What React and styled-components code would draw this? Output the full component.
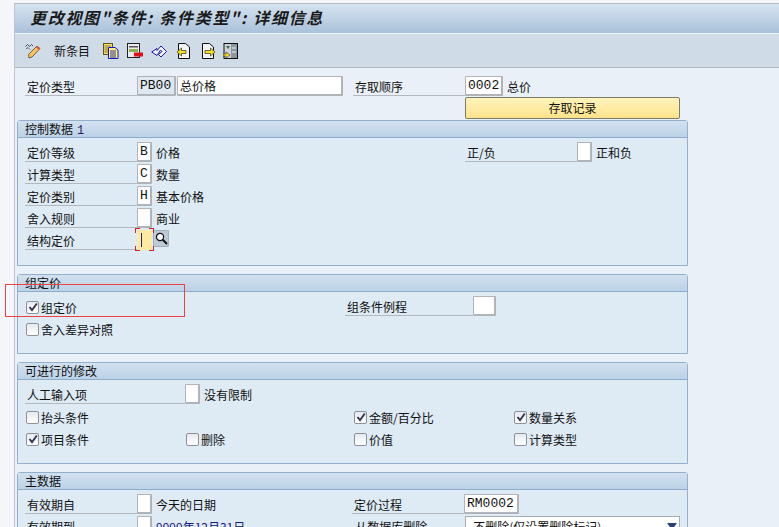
import React from 'react';
import styled, { createGlobalStyle } from 'styled-components';

const GlobalStyle = createGlobalStyle`
  html, body {
    margin: 0;
    padding: 0;
    height: 100%;
    overflow: hidden;
    background: #f4f6fa;
  }
  body {
    font-family: "Noto Sans CJK SC", "Liberation Sans", sans-serif;
    font-size: 12px;
    color: #111;
  }
`;

const Page = styled.div`
  position: relative;
  width: 779px;
  height: 527px;
  overflow: hidden;
  padding: 3px 0 0 14px;
  box-sizing: border-box;
`;

const Screen = styled.div`
  border-left: 1px solid #bcc4cd;
  border-top: 1px solid #b4bcc6;
  height: 100%;
  background: #e9f0f8;
`;

const TitleBar = styled.div`
  height: 26px;
  padding: 0 0 3px 15px;
  display: flex;
  align-items: center;
  background: linear-gradient(#d6e3ef, #a9c1da);
  border-bottom: 1px solid #eef3f8;
  font-size: 16px;
  font-weight: 700;
  font-style: italic;
  letter-spacing: 1.7px;
  color: #1a1a1a;
  white-space: nowrap;
`;

const Toolbar = styled.div`
  height: 33px;
  padding-left: 10px;
  display: flex;
  align-items: center;
  background: #cfdce8;
  border-bottom: 1px solid #aeb8c3;
`;

const ToolText = styled.span`
  margin: 0 13px 0 13px;
  line-height: 16px;
`;

const ToolIcon = styled.svg`
  width: 16px;
  height: 16px;
  margin-right: ${p => p.$gap ?? 8}px;
  flex: none;
`;

const Content = styled.div`
  padding: 8px 0 0 2px;
  width: 671px;
  display: flex;
  flex-direction: column;
`;

const HeadArea = styled.div`
  padding-left: 8px;
  height: 44px;
`;

const Row = styled.div`
  display: flex;
  align-items: stretch;
  height: 20px;
  margin-bottom: 2px;
`;

const Label = styled.div`
  width: ${p => p.$width || 112}px;
  flex: none;
  box-sizing: border-box;
  padding: 3px 0 0 2px;
  line-height: 15px;
  border-bottom: 1px solid #b3b8bd;
  white-space: nowrap;
`;

const Field = styled.div`
  width: ${p => p.$width || 15}px;
  flex: none;
  box-sizing: border-box;
  background: ${p => (p.$active ? '#fde9a2' : p.$readonly ? '#dfe8f0' : '#fff')};
  border: ${p => (p.$active ? '0 none' : '1px solid #b0b4b9')};
  border-right-width: ${p => (p.$active ? 0 : 2)}px;
  border-bottom-width: ${p => (p.$active ? 0 : 2)}px;
  border-radius: 1px;
  font-family: "Liberation Mono", monospace;
  font-size: 13px;
  line-height: 17px;
  padding-left: 2px;
  position: relative;
  white-space: nowrap;
`;

const Value = styled.span`
  margin-left: ${p => p.$gap ?? 4}px;
  padding-top: 3px;
  line-height: 15px;
  color: ${p => p.$color || 'inherit'};
  white-space: nowrap;
`;

const Spacer = styled.div`
  width: ${p => p.$width}px;
  flex: none;
`;

const TextInput = styled(Field)`
  font-family: "Noto Sans CJK SC", sans-serif;
  font-size: 12px;
  margin-left: 1px;
`;

const RecordButton = styled.button`
  display: block;
  width: 215px;
  height: 22px;
  margin: -1px 0 0 440px;
  padding: 0;
  border: 1px solid #7d7a66;
  border-radius: 2px;
  background: linear-gradient(#fff4bd, #fde28a);
  font: inherit;
  color: #111;
  line-height: 18px;
`;

const Panel = styled.section`
  height: ${p => p.$height}px;
  margin-bottom: ${p => p.$gap ?? 8}px;
  box-sizing: border-box;
  background: #deeaf4;
  border: 1px solid #93afcc;
  border-radius: 3px 3px 0 0;
`;

const PanelHeader = styled.div`
  height: 16px;
  padding-left: 7px;
  line-height: 16px;
  background: linear-gradient(#d2e1ef, #bcd2e7);
  border-bottom: 1px solid #8facca;
  white-space: nowrap;
`;

const PanelBody = styled.div`
  padding: 4px 0 0 7px;
`;

const Count = styled.span`
  font-family: "Liberation Mono", monospace;
  color: #2a1a6a;
  margin-left: 4px;
`;

const CheckRow = styled.div`
  display: flex;
  height: 20px;
  margin-bottom: 2px;
  align-items: stretch;
`;

const CheckCell = styled.label`
  display: flex;
  align-items: center;
  width: ${p => p.$width || 'auto'};
  flex: none;
  padding: 2px 0 0 1px;
  box-sizing: border-box;
  gap: 2px;
  white-space: nowrap;
`;

const Box = styled.span`
  width: 11px;
  height: 11px;
  flex: none;
  display: flex;
  align-items: center;
  justify-content: center;
  border: 1px solid #8d929a;
  border-radius: 2px;
  background: linear-gradient(#e6eaef, #ffffff);
`;

const FieldCaret = styled.span`
  position: absolute;
  left: 4px;
  top: 3px;
  width: 1px;
  height: 14px;
  background: #1b2a80;
`;

const redCorner = (x, y) => `linear-gradient(#d8202a, #d8202a) ${x} ${y}`;

// four L shaped corners round the focused field
const Focus = styled.span`
  position: absolute;
  left: -2px;
  top: -2px;
  width: 19px;
  height: 23px;
  pointer-events: none;
  background:
    ${redCorner('0', '0')} / 5px 1px no-repeat,
    ${redCorner('0', '0')} / 1px 5px no-repeat,
    ${redCorner('100%', '0')} / 5px 1px no-repeat,
    ${redCorner('100%', '0')} / 1px 5px no-repeat,
    ${redCorner('0', '100%')} / 5px 1px no-repeat,
    ${redCorner('0', '100%')} / 1px 5px no-repeat,
    ${redCorner('100%', '100%')} / 5px 1px no-repeat,
    ${redCorner('100%', '100%')} / 1px 5px no-repeat;
`;

const SearchHelp = styled.div`
  width: 16px;
  height: 17px;
  margin: 0 0 0 1px;
  flex: none;
  display: flex;
  align-items: center;
  justify-content: center;
  background: #bccad8;
  border: 1px solid #a5afba;
  box-sizing: border-box;
  border-radius: 1px;
`;

const SelectBox = styled.div`
  width: 215px;
  flex: none;
  box-sizing: border-box;
  display: flex;
  align-items: center;
  justify-content: space-between;
  padding: 0 0 0 7px;
  border: 1px solid #a6adb5;
  background: #fff;
  white-space: nowrap;
`;

const SelectArrow = styled.span`
  width: 0;
  height: 0;
  margin-right: 2px;
  border-left: 5px solid transparent;
  border-right: 5px solid transparent;
  border-top: 7px solid #2c3f78;
`;

const Annotation = styled.div`
  position: absolute;
  left: 5px;
  top: 284px;
  width: 180px;
  height: 33px;
  box-sizing: border-box;
  border: 1px solid #f0403f;
  pointer-events: none;
`;

const Check = ({ on, children, width }) => (
  <CheckCell $width={width}>
    <Box>
      {on && (
        <svg width="10" height="10" viewBox="0 0 10 10">
          <path d="M1.5 5 L4 8.2 L8.8 1.5" fill="none" stroke="#33334f" strokeWidth="1.9" />
        </svg>
      )}
    </Box>
    {children}
  </CheckCell>
);

const EditIcon = () => (
  <ToolIcon viewBox="0 0 16 16" $gap={0}>
    <path d="M4 15 L3.5 11.5 L12 3 L15 5.5 L7 14 Z" fill="#f6c35c" stroke="#6a5530" strokeWidth="0.9" />
    <path d="M12 3 L15 5.5 L14 7 L10.8 4.3 Z" fill="#e0564a" />
    <path d="M0.5 3.5 L2.5 1.5 L4.5 3.5 L6.5 1.5 L8 3" fill="none" stroke="#444" strokeWidth="1" />
    <path d="M1 6 L3 4.5 L5 6.5" fill="none" stroke="#666" strokeWidth="1" />
  </ToolIcon>
);

const CopyIcon = () => (
  <ToolIcon viewBox="0 0 16 16" $gap={8}>
    <rect x="0.5" y="0.5" width="9" height="11" fill="#f6e06a" stroke="#5d5320" />
    <path d="M1.5 3 H8 M1.5 5 H5 M1.5 7 H5 M1.5 9 H5" stroke="#6a5f22" strokeWidth="0.8" />
    <path d="M5.5 4.5 H12 L15 7 V15.5 H5.5 Z" fill="#fff27c" stroke="#1414d0" />
    <path d="M7 8 H13 M7 10 H13 M7 12 H13 M7 14 H13" stroke="#1414a0" strokeWidth="0.9" />
  </ToolIcon>
);

const DeleteIcon = () => (
  <ToolIcon viewBox="0 0 16 16" $gap={8}>
    <rect x="0.5" y="0.5" width="12" height="14" fill="#e9edf0" stroke="#222" />
    <rect x="2" y="3" width="9" height="1.5" fill="#555" />
    <rect x="2" y="6" width="9" height="3" fill="#8fb04f" />
    <rect x="7" y="9.5" width="9" height="4" fill="#e0101a" />
  </ToolIcon>
);

const UndoIcon = () => (
  <ToolIcon viewBox="0 0 16 16" $gap={9}>
    <path d="M0.7 9 L6 5.5 V7.5 L10 3 L15.5 8.5 L10 14 L7.5 11.5 L11 8.5 L9.5 7 L6 12.5 Z" fill="#f2f6fb" stroke="#1a1aa8" strokeWidth="1" />
  </ToolIcon>
);

const PrevIcon = () => (
  <ToolIcon viewBox="0 0 16 16" $gap={8}>
    <path d="M2.5 0.5 H9.5 L13.5 4 V15.5 H2.5 Z" fill="#f3f3f3" stroke="#111" />
    <path d="M1 9 L5.5 5 V7.5 H10 V10.5 H5.5 V13 Z" fill="#f6e01e" stroke="#333" strokeWidth="0.7" />
  </ToolIcon>
);

const NextIcon = () => (
  <ToolIcon viewBox="0 0 16 16" $gap={7}>
    <path d="M2.5 0.5 H9.5 L13.5 4 V15.5 H2.5 Z" fill="#f3f3f3" stroke="#111" />
    <path d="M15 9 L10.5 5 V7.5 H5 V10.5 H10.5 V13 Z" fill="#f6e01e" stroke="#333" strokeWidth="0.7" />
  </ToolIcon>
);

const SwitchIcon = () => (
  <ToolIcon viewBox="0 0 16 16" $gap={0}>
    <rect x="1" y="0.5" width="13.5" height="15" fill="#cdd3d8" stroke="#111" />
    <rect x="8" y="1" width="6" height="14" fill="#8b97a3" />
    <path d="M9 5 H13 M9 9 H13" stroke="#f3f3f3" />
    <path d="M0 12 L0 11 H3 V9 L7 12 L3 15 V13 H0 Z" fill="#f6e01e" stroke="#333" strokeWidth="0.6" />
    <path d="M3 3 H7 L5 6 Z" fill="#3a6a3a" />
  </ToolIcon>
);

const SearchIcon = () => (
  <svg width="13" height="13" viewBox="0 0 13 13">
    <circle cx="5" cy="5" r="3.6" fill="#fff" stroke="#111" strokeWidth="1.2" />
    <path d="M7.8 7.8 L12 12" stroke="#111" strokeWidth="2" />
  </svg>
);

export default function App() {
  return (
    <>
      <GlobalStyle />
      <Page>
        <Screen>
          <TitleBar>更改视图"条件: 条件类型": 详细信息</TitleBar>
          <Toolbar>
            <EditIcon />
            <ToolText>新条目</ToolText>
            <CopyIcon />
            <DeleteIcon />
            <UndoIcon />
            <PrevIcon />
            <NextIcon />
            <SwitchIcon />
          </Toolbar>
          <Content>
            <HeadArea>
              <Row>
                <Label>定价类型</Label>
                <Field $width={39} $readonly>PB00</Field>
                <TextInput $width={166}>总价格</TextInput>
                <Spacer $width={10} />
                <Label>存取顺序</Label>
                <Field $width={38}>0002</Field>
                <Value>总价</Value>
              </Row>
              <RecordButton>存取记录</RecordButton>
            </HeadArea>

            <Panel $height={146}>
              <PanelHeader>控制数据<Count>1</Count></PanelHeader>
              <PanelBody>
                <Row>
                  <Label>定价等级</Label>
                  <Field>B</Field>
                  <Value>价格</Value>
                  <Spacer $width={285} />
                  <Label>正/负</Label>
                  <Field />
                  <Value>正和负</Value>
                </Row>
                <Row>
                  <Label>计算类型</Label>
                  <Field>C</Field>
                  <Value>数量</Value>
                </Row>
                <Row>
                  <Label>定价类别</Label>
                  <Field>H</Field>
                  <Value>基本价格</Value>
                </Row>
                <Row>
                  <Label>舍入规则</Label>
                  <Field />
                  <Value>商业</Value>
                </Row>
                <Row>
                  <Label>结构定价</Label>
                  <Field $active>
                    <FieldCaret />
                    <Focus />
                  </Field>
                  <SearchHelp><SearchIcon /></SearchHelp>
                </Row>
              </PanelBody>
            </Panel>

            <Panel $height={80}>
              <PanelHeader>组定价</PanelHeader>
              <PanelBody>
                <CheckRow>
                  <Check on width="320px">组定价</Check>
                  <Label $width={128}>组条件例程</Label>
                  <Field $width={23} />
                </CheckRow>
                <CheckRow>
                  <Check>舍入差异对照</Check>
                </CheckRow>
              </PanelBody>
            </Panel>

            <Panel $height={102}>
              <PanelHeader>可进行的修改</PanelHeader>
              <PanelBody>
                <Row>
                  <Label $width={160}>人工输入项</Label>
                  <Field />
                  <Value>没有限制</Value>
                </Row>
                <CheckRow>
                  <Check width="328px">抬头条件</Check>
                  <Check on width="160px">金额/百分比</Check>
                  <Check on>数量关系</Check>
                </CheckRow>
                <CheckRow>
                  <Check on width="160px">项目条件</Check>
                  <Check width="168px">删除</Check>
                  <Check width="160px">价值</Check>
                  <Check>计算类型</Check>
                </CheckRow>
              </PanelBody>
            </Panel>

            <Panel $height={80} $gap={0}>
              <PanelHeader>主数据</PanelHeader>
              <PanelBody>
                <Row>
                  <Label>有效期自</Label>
                  <Field />
                  <Value>今天的日期</Value>
                  <Spacer $width={136} />
                  <Label>定价过程</Label>
                  <Field $width={55}>RM0002</Field>
                </Row>
                <Row>
                  <Label>有效期到</Label>
                  <Field />
                  <Value $color="#1a1a80">9999年12月31日</Value>
                  <Spacer $width={108} />
                  <Label>从数据库删除</Label>
                  <SelectBox>
                    不删除(仅设置删除标记)
                    <SelectArrow />
                  </SelectBox>
                </Row>
              </PanelBody>
            </Panel>
          </Content>
        </Screen>
        <Annotation />
      </Page>
    </>
  );
}
